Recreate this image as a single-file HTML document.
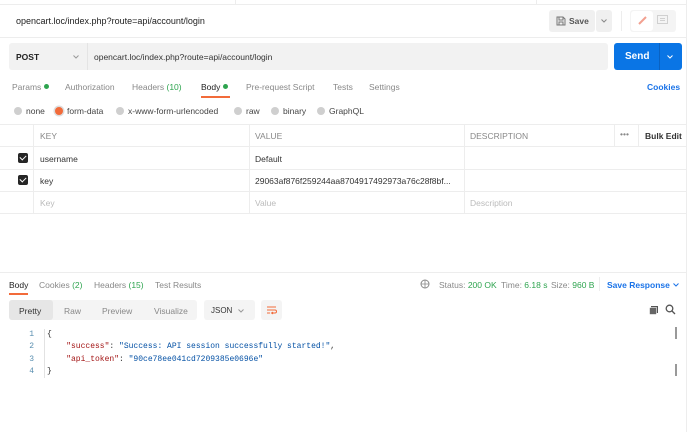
<!DOCTYPE html>
<html><head><meta charset="utf-8"><style>
*{box-sizing:border-box;margin:0;padding:0}
body{width:696px;height:432px;background:#fff;font-family:"Liberation Sans",sans-serif;font-size:8.5px;color:#333;position:relative;overflow:hidden}
.a{position:absolute;white-space:nowrap}
.g{color:#888}
.gr{color:#2ea44f}
.hl{position:absolute;height:1px;background:#ededed}
.vl{position:absolute;width:1px;background:#ededed}
.dot{display:inline-block;width:5px;height:5px;border-radius:50%;background:#2ea44f;margin-left:3px;vertical-align:1px}
.rad{display:inline-block;width:8px;height:8px;border-radius:50%;background:#cfcfcf;vertical-align:-1px;margin-right:4px}
.cb{position:absolute;width:10px;height:10px;background:#262626;border-radius:2px}
.cb:after{content:"";position:absolute;left:3px;top:1px;width:3px;height:5px;border:solid #fff;border-width:0 1.5px 1.5px 0;transform:rotate(45deg)}
.mono{font-family:"Liberation Mono",monospace;font-size:8px}
</style></head><body>
<div class="hl" style="left:0;top:4px;width:686px"></div>
<div class="vl" style="left:235px;top:0;height:4px"></div>
<div class="vl" style="left:536px;top:0;height:4px"></div>
<div class="vl" style="left:686px;top:0;height:432px"></div>
<div class="a" style="left:16px;top:16px;font-size:9px;color:#222">opencart.loc/index.php?route=api/account/login</div>
<div class="a" style="left:549px;top:10px;width:46px;height:22px;background:#f0f0f0;border-radius:3px"></div>
<svg class="a" style="left:556px;top:16px" width="10" height="10" viewBox="0 0 10 10"><path d="M1 1h6l2 2v6H1z M3 1v3h4V1 M3 9V6h4v3" fill="none" stroke="#777" stroke-width="1"/></svg>
<div class="a" style="left:569px;top:16px;color:#555;font-weight:bold">Save</div>
<div class="a" style="left:596px;top:10px;width:16px;height:22px;background:#f0f0f0;border-radius:3px"></div>
<svg class="a" style="left:601px;top:19px" width="6" height="4"><path d="M0.5 0.5L3 3l2.5-2.5" fill="none" stroke="#888"/></svg>
<div class="vl" style="left:621px;top:11px;height:20px"></div>
<div class="a" style="left:630px;top:10px;width:46px;height:22px;background:#f4f4f4;border-radius:3px"></div>
<div class="a" style="left:631px;top:11px;width:22px;height:20px;background:#fff;border-radius:3px"></div>
<svg class="a" style="left:637px;top:15px" width="11" height="11"><path d="M2 9L9 2" stroke="#f2a090" stroke-width="2"/></svg>
<svg class="a" style="left:657px;top:15px" width="11" height="10"><rect x="0.5" y="0.5" width="10" height="8" fill="none" stroke="#d0d0d0"/><path d="M3 3.5h5M3 5.5h5" stroke="#d0d0d0"/></svg>
<div class="hl" style="left:0;top:37px;width:686px"></div>
<div class="a" style="left:9px;top:43px;width:599px;height:27px;background:#f2f2f2;border-radius:3px"></div>
<div class="vl" style="left:87px;top:43px;height:27px;background:#e4e4e4"></div>
<div class="a" style="left:16px;top:52px;font-weight:bold;color:#222">POST</div>
<svg class="a" style="left:73px;top:55px" width="6" height="4"><path d="M0.5 0.5L3 3l2.5-2.5" fill="none" stroke="#999"/></svg>
<div class="a" style="left:94px;top:52px;color:#333">opencart.loc/index.php?route=api/account/login</div>
<div class="a" style="left:614px;top:43px;width:68px;height:27px;background:#0a75e5;border-radius:3px"></div>
<div class="vl" style="left:659px;top:43px;height:27px;background:#0a62c2"></div>
<div class="a" style="left:625px;top:51px;color:#fff;font-weight:bold;font-size:10px">Send</div>
<svg class="a" style="left:667px;top:55px" width="6" height="4"><path d="M0.5 0.5L3 3l2.5-2.5" fill="none" stroke="#fff"/></svg>
<div class="a g" style="left:12px;top:82px">Params<span class="dot"></span></div>
<div class="a g" style="left:65px;top:82px">Authorization</div>
<div class="a g" style="left:132px;top:82px">Headers <span class="gr">(10)</span></div>
<div class="a" style="left:201px;top:82px;color:#222">Body<span class="dot"></span></div>
<div class="a" style="left:201px;top:96px;width:29px;height:2px;background:#f26b3a"></div>
<div class="a g" style="left:246px;top:82px">Pre-request Script</div>
<div class="a g" style="left:333px;top:82px">Tests</div>
<div class="a g" style="left:369px;top:82px">Settings</div>
<div class="a" style="left:647px;top:82px;color:#1a73e8;font-weight:bold">Cookies</div>
<div class="a" style="left:14px;top:106px;color:#444"><span class="rad"></span>none</div>
<div class="a" style="left:55px;top:106px;color:#444"><span class="rad" style="background:#f26b3a;box-shadow:0 0 0 1.5px #ddd"></span>form-data</div>
<div class="a" style="left:116px;top:106px;color:#444"><span class="rad"></span>x-www-form-urlencoded</div>
<div class="a" style="left:234px;top:106px;color:#444"><span class="rad"></span>raw</div>
<div class="a" style="left:271px;top:106px;color:#444"><span class="rad"></span>binary</div>
<div class="a" style="left:317px;top:106px;color:#444"><span class="rad"></span>GraphQL</div>
<div class="hl" style="left:0;top:124px;width:686px"></div>
<div class="hl" style="left:0;top:146px;width:686px"></div>
<div class="hl" style="left:0;top:169px;width:686px"></div>
<div class="hl" style="left:0;top:191px;width:686px"></div>
<div class="hl" style="left:0;top:213px;width:686px"></div>
<div class="vl" style="left:33px;top:124px;height:89px"></div>
<div class="vl" style="left:249px;top:124px;height:89px"></div>
<div class="vl" style="left:464px;top:124px;height:89px"></div>
<div class="vl" style="left:614px;top:124px;height:22px"></div>
<div class="vl" style="left:638px;top:124px;height:22px"></div>
<div class="a g" style="left:40px;top:131px">KEY</div>
<div class="a g" style="left:255px;top:131px">VALUE</div>
<div class="a g" style="left:470px;top:131px">DESCRIPTION</div>
<div class="a g" style="left:620px;top:129px">•••</div>
<div class="a" style="left:645px;top:131px;font-weight:bold;color:#333">Bulk Edit</div>
<div class="cb" style="left:18px;top:153px"></div>
<div class="cb" style="left:18px;top:175px"></div>
<div class="a" style="left:40px;top:154px">username</div>
<div class="a" style="left:255px;top:154px">Default</div>
<div class="a" style="left:40px;top:176px">key</div>
<div class="a" style="left:255px;top:176px">29063af876f259244aa8704917492973a76c28f8bf...</div>
<div class="a" style="left:40px;top:198px;color:#bbb">Key</div>
<div class="a" style="left:255px;top:198px;color:#bbb">Value</div>
<div class="a" style="left:470px;top:198px;color:#bbb">Description</div>
<div class="hl" style="left:0;top:272px;width:686px"></div>
<div class="a" style="left:9px;top:280px;color:#222">Body</div>
<div class="a" style="left:9px;top:293px;width:19px;height:2px;background:#f26b3a"></div>
<div class="a g" style="left:39px;top:280px">Cookies <span class="gr">(2)</span></div>
<div class="a g" style="left:94px;top:280px">Headers <span class="gr">(15)</span></div>
<div class="a g" style="left:155px;top:280px">Test Results</div>
<svg class="a" style="left:420px;top:279px" width="10" height="10"><circle cx="5" cy="5" r="4" fill="none" stroke="#888"/><path d="M1 5h8M5 1v8" stroke="#888" stroke-width=".8"/></svg>
<div class="a g" style="left:439px;top:280px">Status: <span class="gr">200 OK</span></div>
<div class="a g" style="left:501px;top:280px">Time: <span class="gr">6.18 s</span></div>
<div class="a g" style="left:551px;top:280px">Size: <span class="gr">960 B</span></div>
<div class="vl" style="left:599px;top:277px;height:14px"></div>
<div class="a" style="left:607px;top:280px;color:#1a73e8;font-weight:bold">Save Response</div>
<svg class="a" style="left:673px;top:283px" width="6" height="4"><path d="M0.5 0.5L3 3l2.5-2.5" fill="none" stroke="#1a73e8"/></svg>
<div class="a" style="left:9px;top:300px;width:188px;height:20px;background:#f4f4f4;border-radius:3px"></div>
<div class="a" style="left:9px;top:300px;width:44px;height:20px;background:#e6e6e6;border-radius:3px"></div>
<div class="a" style="left:19px;top:306px;color:#333">Pretty</div>
<div class="a g" style="left:64px;top:306px">Raw</div>
<div class="a g" style="left:102px;top:306px">Preview</div>
<div class="a g" style="left:154px;top:306px">Visualize</div>
<div class="a" style="left:204px;top:300px;width:51px;height:20px;background:#f4f4f4;border-radius:3px"></div>
<div class="a" style="left:211px;top:306px;font-size:8px;color:#333">JSON</div>
<svg class="a" style="left:238px;top:309px" width="6" height="4"><path d="M0.5 0.5L3 3l2.5-2.5" fill="none" stroke="#999"/></svg>
<div class="a" style="left:261px;top:300px;width:21px;height:20px;background:#f4f4f4;border-radius:3px"></div>
<svg class="a" style="left:266px;top:305px" width="11" height="10"><path d="M1 2h9M1 5h8a1.5 1.5 0 0 1 0 3H6M1 8h3M7 7l-1.5 1L7 9" fill="none" stroke="#f26b3a" stroke-width="1"/></svg>
<svg class="a" style="left:649px;top:305px" width="10" height="10"><rect x="2" y="1" width="7" height="7" fill="#555"/><rect x="0.5" y="2.5" width="7" height="7" fill="#666" stroke="#fff" stroke-width=".6"/></svg>
<svg class="a" style="left:665px;top:304px" width="11" height="11"><circle cx="4.5" cy="4.5" r="3.3" fill="none" stroke="#555" stroke-width="1.3"/><path d="M7 7l3 3" stroke="#555" stroke-width="1.3"/></svg>
<div class="a" style="left:675px;top:327px;width:2px;height:12px;background:#999"></div>
<div class="a" style="left:675px;top:364px;width:2px;height:12px;background:#999"></div>
<div class="a mono" style="left:28px;top:329px;line-height:12.3px;color:#5a8fb0;text-align:right;width:6px">1<br>2<br>3<br>4</div>
<div class="a" style="left:44px;top:329px;width:1px;height:49px;background:#e2e2e2"></div>
<div class="a mono" style="left:47px;top:329px;line-height:12.3px;color:#333">{<br>&nbsp;&nbsp;&nbsp;&nbsp;<span style="color:#a31515">"success"</span>: <span style="color:#0451a5">"Success: API session successfully started!"</span>,<br>&nbsp;&nbsp;&nbsp;&nbsp;<span style="color:#a31515">"api_token"</span>: <span style="color:#0451a5">"90ce78ee041cd7209385e0696e"</span><br>}</div>
</body></html>
